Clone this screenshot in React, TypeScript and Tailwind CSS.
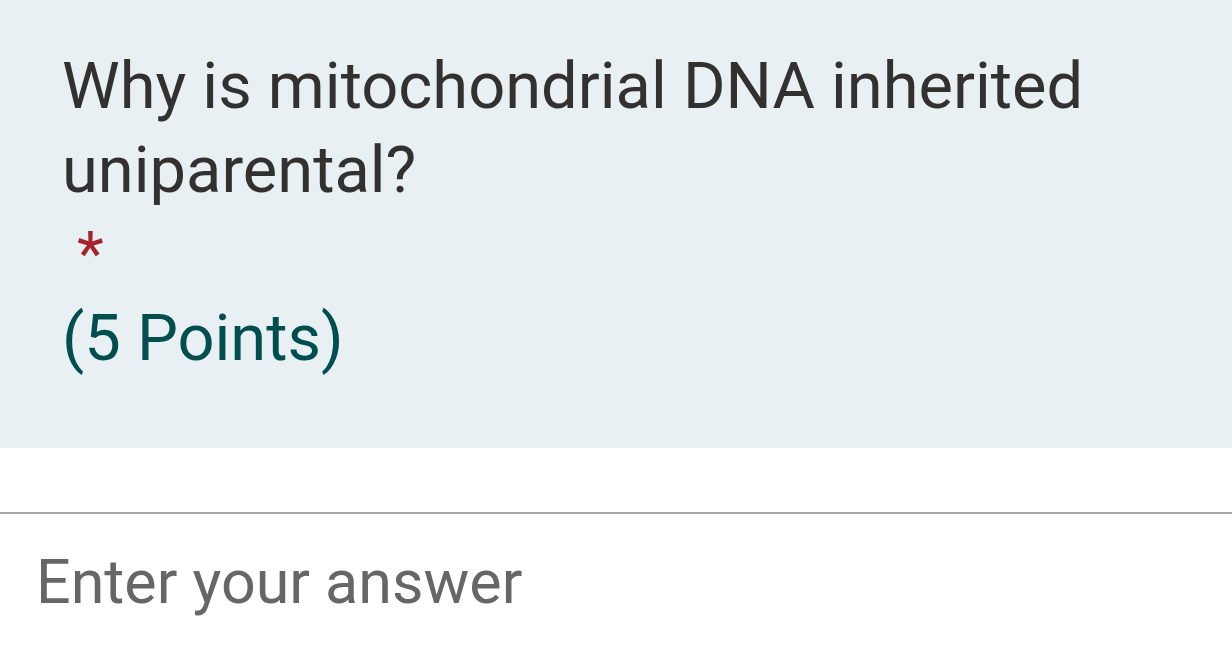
export default function App() {
  return (
    <div className="w-[1232px] h-[649px] overflow-hidden bg-white" style={{ fontFamily: 'Roboto, "Noto Sans", sans-serif' }}>
      <div className="h-[448px] bg-[#e8f0f3] pl-[62px] pt-[44px]">
        <div className="text-[65px] leading-[84px] text-[#323130] pr-[120px]">
          Why is mitochondrial DNA inherited uniparental?
        </div>
        <div className="pl-[15px] text-[62px] leading-[84px] text-[#a4262c]">*</div>
        <div className="text-[65px] leading-[84px] text-[#004e4e]">(5 Points)</div>
      </div>
      <div className="mt-[64px] border-t-2 border-[#a6a6a6] pl-[36px] pt-[26px]">
        <div className="text-[61px] leading-[84px] text-[#666666]">Enter your answer</div>
      </div>
    </div>
  );
}
